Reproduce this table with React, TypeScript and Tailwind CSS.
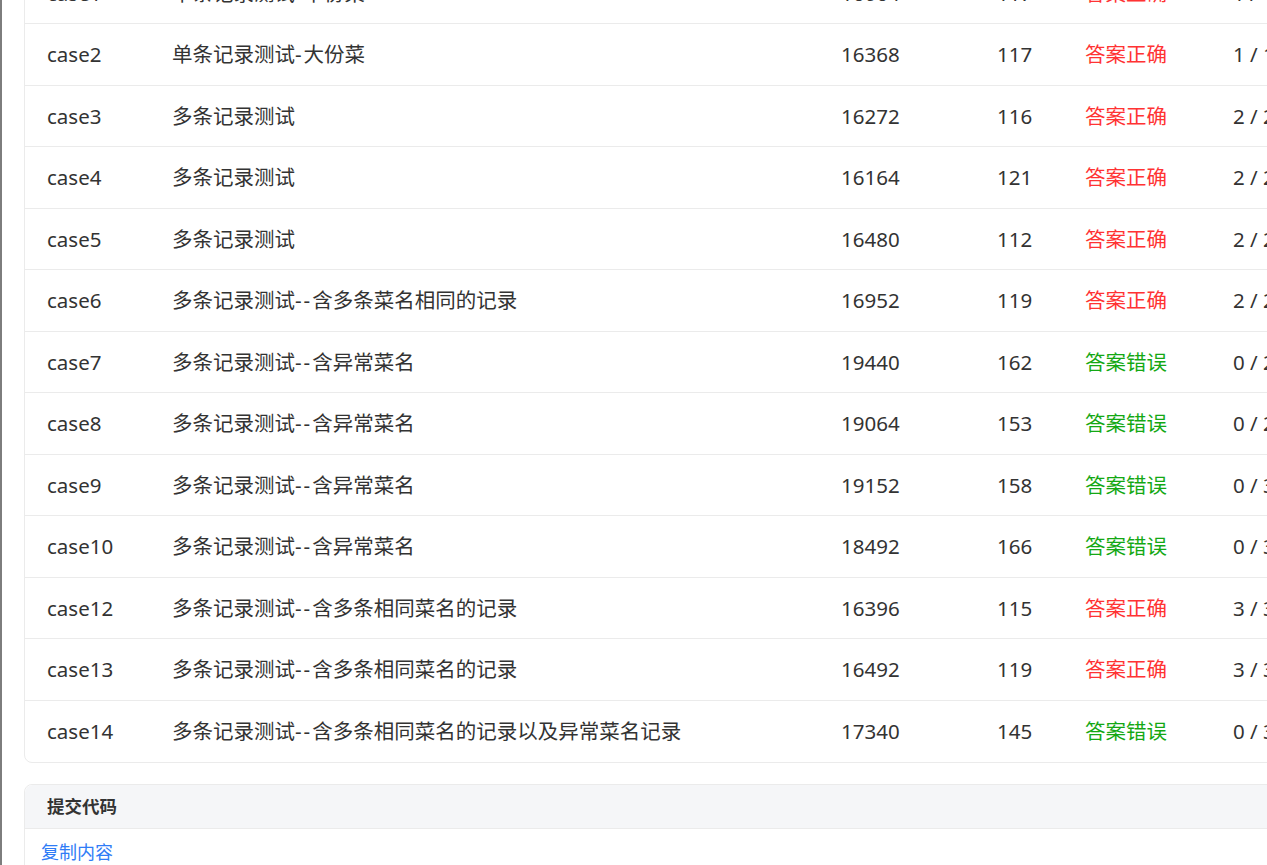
const rows = [
  { id: 'case1', name: '单条记录测试-单份菜', mem: '16064', time: '117', ok: true, score: '1 / 1' },
  { id: 'case2', name: '单条记录测试-大份菜', mem: '16368', time: '117', ok: true, score: '1 / 1' },
  { id: 'case3', name: '多条记录测试', mem: '16272', time: '116', ok: true, score: '2 / 2' },
  { id: 'case4', name: '多条记录测试', mem: '16164', time: '121', ok: true, score: '2 / 2' },
  { id: 'case5', name: '多条记录测试', mem: '16480', time: '112', ok: true, score: '2 / 2' },
  { id: 'case6', name: '多条记录测试--含多条菜名相同的记录', mem: '16952', time: '119', ok: true, score: '2 / 2' },
  { id: 'case7', name: '多条记录测试--含异常菜名', mem: '19440', time: '162', ok: false, score: '0 / 2' },
  { id: 'case8', name: '多条记录测试--含异常菜名', mem: '19064', time: '153', ok: false, score: '0 / 2' },
  { id: 'case9', name: '多条记录测试--含异常菜名', mem: '19152', time: '158', ok: false, score: '0 / 3' },
  { id: 'case10', name: '多条记录测试--含异常菜名', mem: '18492', time: '166', ok: false, score: '0 / 3' },
  { id: 'case12', name: '多条记录测试--含多条相同菜名的记录', mem: '16396', time: '115', ok: true, score: '3 / 3' },
  { id: 'case13', name: '多条记录测试--含多条相同菜名的记录', mem: '16492', time: '119', ok: true, score: '3 / 3' },
  { id: 'case14', name: '多条记录测试--含多条相同菜名的记录以及异常菜名记录', mem: '17340', time: '145', ok: false, score: '0 / 3' },
];

// the hyphens in the names render a bit wider than Noto's
function CaseName({ text }: { text: string }) {
  const parts = text.split(/(-+)/);
  return (
    <>
      {parts.map((p, i) =>
        p.startsWith('-') ? (
          <span key={i} className="tracking-[2px]">
            {p}
          </span>
        ) : (
          <span key={i}>{p}</span>
        )
      )}
    </>
  );
}

export default function App() {
  return (
    <div
      className="flex h-[865px] w-[1267px] overflow-hidden bg-white text-[#333]"
      style={{ fontFamily: '"Noto Sans", "Noto Sans CJK SC", sans-serif' }}
    >
      {/* window edge behind */}
      <div className="w-[2px] shrink-0 bg-[#7d7d7d]" />

      <div className="ml-[22px] -mt-[38.5px] flex w-[1300px] shrink-0 flex-col">
        {/* Test case results */}
        <div className="rounded-lg border border-[#ebebeb] bg-white">
          {rows.map((r, i) => (
            <div
              key={r.id}
              className={`flex h-[61.5px] items-center pl-[22px] pt-[1px] text-[20.5px] ${
                i < rows.length - 1 ? 'border-b border-[#ebebeb]' : ''
              }`}
            >
              <div className="w-[125px]">{r.id}</div>
              <div className="w-[669px]">
                <CaseName text={r.name} />
              </div>
              <div className="w-[156px]">{r.mem}</div>
              <div className="w-[88px]">{r.time}</div>
              <div className={`w-[148px] ${r.ok ? 'text-[#ff3333]' : 'text-[#14a814]'}`}>
                {r.ok ? '答案正确' : '答案错误'}
              </div>
              <div className="whitespace-nowrap">{r.score}</div>
            </div>
          ))}
        </div>

        {/* Submitted code */}
        <div className="mt-[21px] rounded-t-lg border border-[#ebebeb] bg-white">
          <div className="flex h-[44px] items-center rounded-t-lg border-b border-[#ebebeb] bg-[#f5f6f8] pl-[22px] text-[17.5px] font-semibold">
            提交代码
          </div>
          <div className="pl-4 pt-[10px] text-[18px] text-[#2f7cf6]">复制内容</div>
        </div>
      </div>
    </div>
  );
}
